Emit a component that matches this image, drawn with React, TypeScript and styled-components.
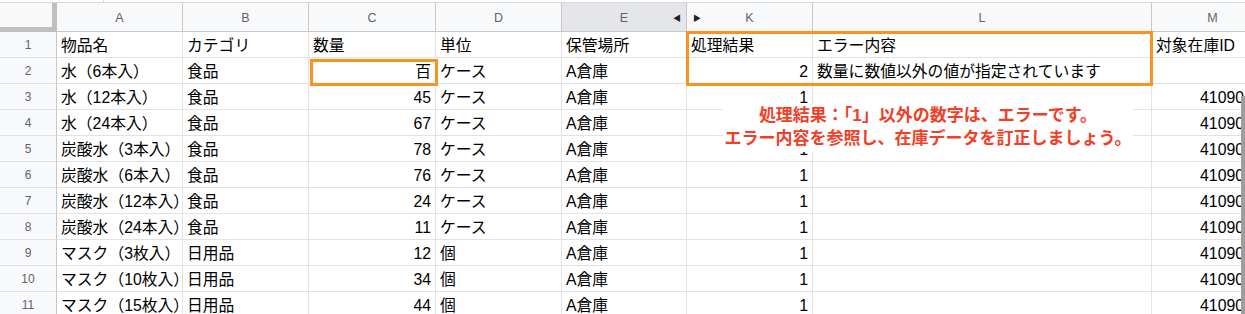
import styled, { createGlobalStyle } from "styled-components";

const GlobalStyle = createGlobalStyle`
  html, body {
    margin: 0;
    padding: 0;
    background: #ffffff;
    overflow: hidden;
  }
`;

const FONT = `"Liberation Sans", "Noto Sans CJK JP", sans-serif`;

// endPad: the last column runs past the window, its numbers show just inside the edge
const COLUMNS = [
  { key: "A", width: 126, endPad: 4 },
  { key: "B", width: 126, endPad: 4 },
  { key: "C", width: 127, endPad: 4 },
  { key: "D", width: 126, endPad: 4 },
  { key: "E", width: 125, endPad: 4, active: true, hiddenAfter: true },
  { key: "K", width: 126, endPad: 4, hiddenBefore: true },
  { key: "L", width: 339, endPad: 4 },
  { key: "M", width: 122, endPad: 29 },
];

type Row = (string | number)[];

const ROWS: Row[] = [
  ["物品名", "カテゴリ", "数量", "単位", "保管場所", "処理結果", "エラー内容", "対象在庫ID"],
  ["水（6本入）", "食品", "百", "ケース", "A倉庫", 2, "数量に数値以外の値が指定されています", ""],
  ["水（12本入）", "食品", 45, "ケース", "A倉庫", 1, "", 41090],
  ["水（24本入）", "食品", 67, "ケース", "A倉庫", 1, "", 41090],
  ["炭酸水（3本入）", "食品", 78, "ケース", "A倉庫", 1, "", 41090],
  ["炭酸水（6本入）", "食品", 76, "ケース", "A倉庫", 1, "", 41090],
  ["炭酸水（12本入）", "食品", 24, "ケース", "A倉庫", 1, "", 41090],
  ["炭酸水（24本入）", "食品", 11, "ケース", "A倉庫", 1, "", 41090],
  ["マスク（3枚入）", "日用品", 12, "個", "A倉庫", 1, "", 41090],
  ["マスク（10枚入）", "日用品", 34, "個", "A倉庫", 1, "", 41090],
  ["マスク（15枚入）", "日用品", 44, "個", "A倉庫", 1, "", 41090],
];

function App() {
  return (
    <Page>
      <GlobalStyle />
      <TopStrip>
        <StripDivider />
      </TopStrip>
      <Sheet>
        <Corner />
        {COLUMNS.map((c) => (
          <ColHeader key={c.key} $active={!!c.active}>
            {c.hiddenBefore && <HiddenArrow $side="left">▶</HiddenArrow>}
            {c.key}
            {c.hiddenAfter && <HiddenArrow $side="right">◀</HiddenArrow>}
          </ColHeader>
        ))}
        {ROWS.map((row, r) => (
          <RowGroup key={r}>
            <RowHeader>{r + 1}</RowHeader>
            {row.map((v, i) => (
              <Cell
                key={i}
                $numeric={typeof v === "number" || v === "百"}
                $endPad={COLUMNS[i].endPad}
              >
                {v}
              </Cell>
            ))}
          </RowGroup>
        ))}
      </Sheet>

      <Highlight $x={310} $y={59} $w={128} $h={27} />
      <Highlight $x={686} $y={31} $w={467} $h={55} />

      <Note>
        処理結果：「1」以外の数字は、エラーです。
        <br />
        エラー内容を参照し、在庫データを訂正しましょう。
      </Note>

      <ScrollEdge />
    </Page>
  );
}

export default App;

const Page = styled.div`
  position: relative;
  width: 1245px;
  height: 314px;
  overflow: hidden;
  font-family: ${FONT};
  color: #000000;
`;

const TopStrip = styled.div`
  height: 3px;
  border-bottom: 1px solid #d9d9d9;
  box-sizing: border-box;
  background: #ffffff;
`;

const StripDivider = styled.div`
  margin-left: 103px;
  width: 1px;
  height: 100%;
  background: #d9d9d9;
`;

const Sheet = styled.div`
  display: grid;
  grid-template-columns: 57px ${COLUMNS.map((c) => `${c.width}px`).join(" ")};
  grid-auto-rows: 26px;
  grid-template-rows: 29px;
`;

const RowGroup = styled.div`
  display: contents;
`;

const Corner = styled.div`
  background: #f8f9fa;
  border-right: 5px solid #bfbfbf;
  border-bottom: 5px solid #bfbfbf;
  box-sizing: border-box;
`;

const ColHeader = styled.div<{ $active: boolean }>`
  position: relative;
  display: flex;
  align-items: center;
  justify-content: center;
  background: ${(p) => (p.$active ? "#e4e6e9" : "#f8f9fa")};
  border-right: 1px solid #c7c7c7;
  border-bottom: 1px solid #c7c7c7;
  box-sizing: border-box;
  color: #5f6368;
  font-size: 12.5px;
  padding-top: 1px;
`;

const HiddenArrow = styled.span<{ $side: "left" | "right" }>`
  position: absolute;
  top: 50%;
  ${(p) => (p.$side === "left" ? "left: 6px;" : "right: 5px;")}
  transform: translateY(-50%);
  font-size: 8px;
  color: #202124;
`;

const RowHeader = styled.div`
  display: flex;
  align-items: center;
  justify-content: center;
  background: #f8f9fa;
  border-right: 1px solid #c7c7c7;
  border-bottom: 1px solid #e2e2e2;
  box-sizing: border-box;
  color: #5f6368;
  font-size: 12px;
  padding-top: 1px;
`;

const Cell = styled.div<{ $numeric: boolean; $endPad: number }>`
  display: flex;
  align-items: center;
  justify-content: ${(p) => (p.$numeric ? "flex-end" : "flex-start")};
  padding: 2px ${(p) => p.$endPad}px 0 4px;
  border-right: 1px solid #e2e2e2;
  border-bottom: 1px solid #e2e2e2;
  box-sizing: border-box;
  background: #ffffff;
  font-size: 15.8px;
  line-height: 20px;
  white-space: nowrap;
  overflow: hidden;
`;

const Highlight = styled.div<{ $x: number; $y: number; $w: number; $h: number }>`
  position: absolute;
  left: ${(p) => p.$x}px;
  top: ${(p) => p.$y}px;
  width: ${(p) => p.$w}px;
  height: ${(p) => p.$h}px;
  border: 3px solid #f7931e;
  box-sizing: border-box;
  pointer-events: none;
`;

const Note = styled.div`
  position: absolute;
  left: 723px;
  top: 104px;
  width: 410px;
  height: 48px;
  background: #ffffff;
  color: #f23e27;
  font-size: 17px;
  font-weight: 700;
  line-height: 23px;
  text-align: center;
  white-space: nowrap;
`;

const ScrollEdge = styled.div`
  position: absolute;
  right: 0;
  top: 96px;
  bottom: 0;
  width: 4px;
  background: #9e9e9e;
`;
